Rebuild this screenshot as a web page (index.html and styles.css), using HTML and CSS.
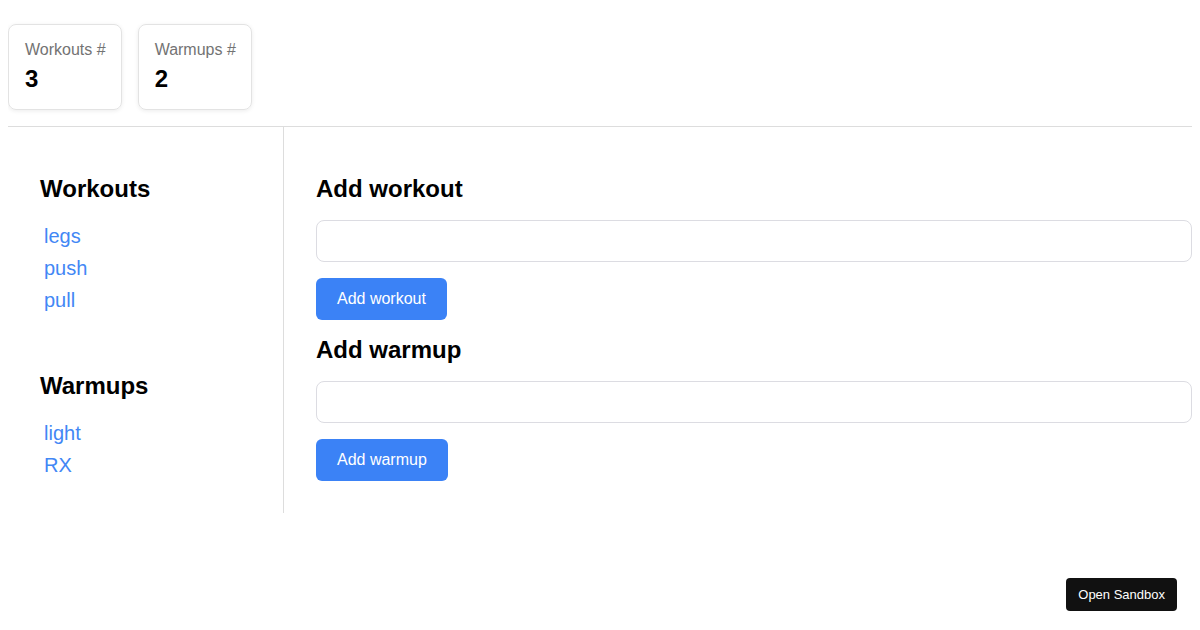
FILE: index.html
```html
<!DOCTYPE html>
<html>
    <head>
        <meta charset="utf-8">
        <title>Workouts</title>
        <link rel="stylesheet" href="styles.css">
    </head>
    <body>
        <div class="stats">
            <div class="stat">
                <div class="stat-label">Workouts #</div>
                <div class="stat-value">3</div>
            </div>
            <div class="stat">
                <div class="stat-label">Warmups #</div>
                <div class="stat-value">2</div>
            </div>
        </div>
        <div class="layout">
            <div class="sidebar">
                <div class="section">
                    <h2>Workouts</h2>
                    <ul class="links">
                        <li><a href="#">legs</a></li>
                        <li><a href="#">push</a></li>
                        <li><a href="#">pull</a></li>
                    </ul>
                </div>
                <div class="section">
                    <h2>Warmups</h2>
                    <ul class="links">
                        <li><a href="#">light</a></li>
                        <li><a href="#">RX</a></li>
                    </ul>
                </div>
            </div>
            <div class="main">
                <h2>Add workout</h2>
                <input class="field" type="text">
                <button class="btn">Add workout</button>
                <h2>Add warmup</h2>
                <input class="field" type="text">
                <button class="btn">Add warmup</button>
            </div>
        </div>
        <a class="sandbox" href="#">Open Sandbox</a>
    </body>
</html>
```

FILE: styles.css
```css
body{margin:8px; font-family:"Liberation Sans", Arial, sans-serif; color:#000; background:#fff}
h2{font-size:24px; line-height:28.8px; margin:16px 0; font-weight:bold}

.stats{display:flex; gap:16px; padding:16px 0; border-bottom:1px solid #ddd}
.stat{border:1px solid #e3e3e3; border-radius:8px; padding:16px 15px 16px 16px; box-shadow:0 1px 4px rgba(0,0,0,.08)}
.stat-label{font-size:16px; line-height:18.4px; color:#737373}
.stat-value{font-size:24px; line-height:27.6px; font-weight:bold; margin-top:6px}

.layout{display:flex}
.sidebar{width:243px; padding:32px 0 31px 32px; border-right:1px solid #ddd; display:flex; flex-direction:column; gap:40px}
.links{list-style:none; margin:0; padding:0 0 0 4px}
.links li{font-size:20px; line-height:32px}
.links a{color:#4287f5; text-decoration:none}

.main{flex:1; padding:0 0 32px 32px; display:flex; flex-direction:column; align-items:flex-start}
.main h2:first-child{margin-top:48px}
.field{box-sizing:border-box; width:100%; height:42px; border:1px solid #dcdce2; border-radius:8px; margin:0 0 16px; padding:0 12px; font-size:16px; font-family:inherit}
.btn{height:42px; padding:0 21px; border:0; border-radius:6px; background:#3b82f6; color:#fff; font-size:16px; font-family:inherit}

.sandbox{position:fixed; right:23px; bottom:19px; background:#111; color:#fff; font-size:13px; line-height:33px; padding:0 12px; border-radius:4px; text-decoration:none}
```
